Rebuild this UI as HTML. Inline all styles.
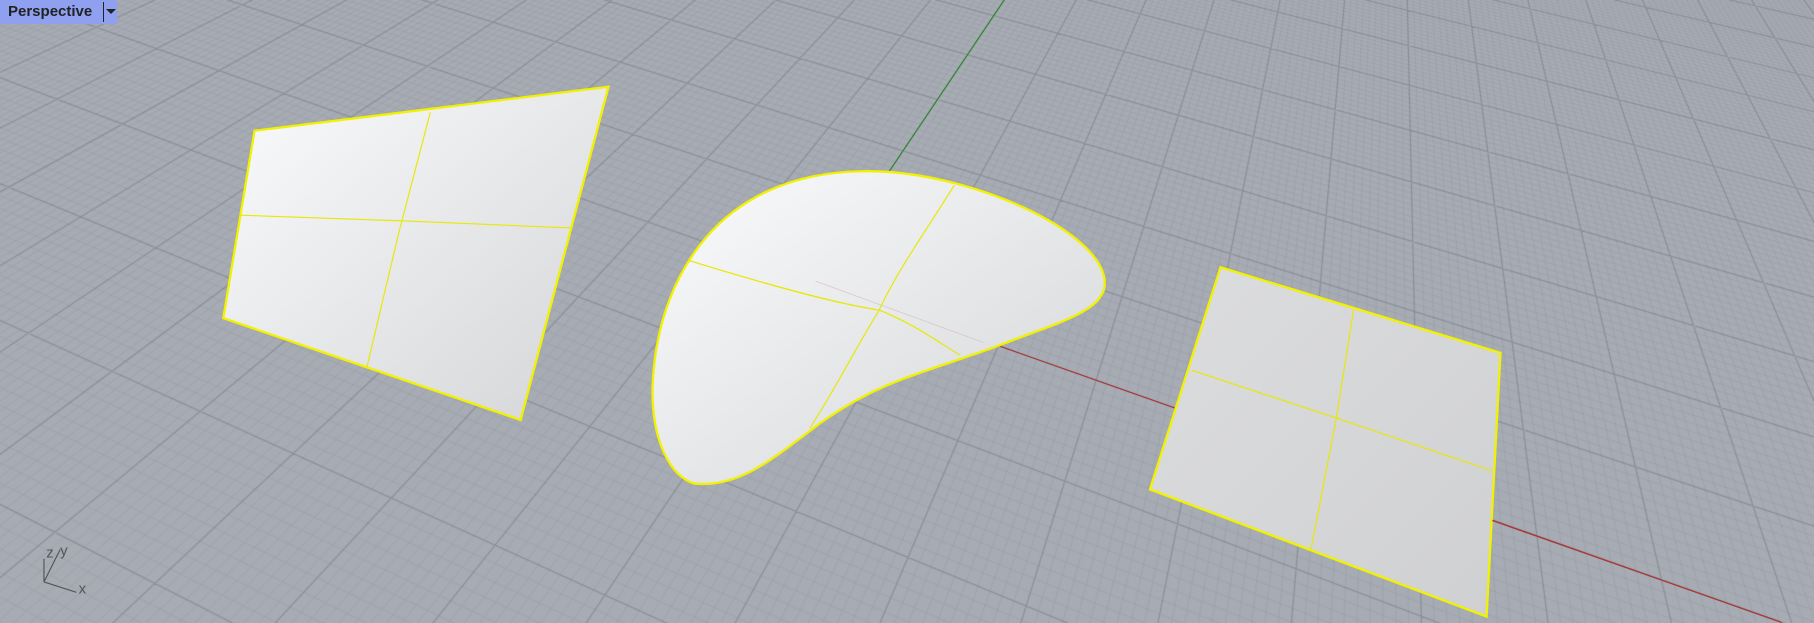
<!DOCTYPE html>
<html><head><meta charset="utf-8"><style>
html,body{margin:0;padding:0;width:1814px;height:623px;overflow:hidden;background:#a7abb3}
canvas,svg{position:absolute;left:0;top:0}
#lbl{position:absolute;left:0;top:0;width:117px;height:24px;background:#8fa0f0;font:bold 15px "Liberation Sans",sans-serif;color:#222;}
#lbl span{position:absolute;left:8px;top:3px}
#lbl i{position:absolute;left:103px;top:2px;width:1px;height:20px;background:#222}
#lbl b{position:absolute;left:106px;top:9px;border-left:5px solid transparent;border-right:5px solid transparent;border-top:5px solid #222}
</style></head><body>
<canvas id="c" width="1814" height="623"></canvas>
<svg width="1814" height="623" viewBox="0 0 1568 538.5">
<defs>
<linearGradient id="g1" x1="0" y1="0" x2="1" y2="1"><stop offset="0" stop-color="#fafbfc"/><stop offset="1" stop-color="#d4d5d7"/></linearGradient>
<linearGradient id="g2" x1="0" y1="0" x2="1" y2="1"><stop offset="0" stop-color="#dcdddf"/><stop offset="1" stop-color="#cfd0d2"/></linearGradient>
</defs>
<line x1="868" y1="0" x2="705" y2="243" stroke="#2e8a2e" stroke-width="1"/>
<line x1="705" y1="243" x2="1540" y2="538" stroke="#a83a3a" stroke-width="1"/>
<polygon points="220,113 526,75 450,363 193,275" fill="url(#g1)" stroke="#f2f200" stroke-width="2"/>
<path d="M207,186 L350,191 L493,197 M372,97 L345,200 L317,318" fill="none" stroke="#e8e800" stroke-width="1"/>
<path d="M600,418 C575,410 560,370 565,320 C572,240 620,150 745,148 C835,146 955,200 955,245 C955,270 910,280 860,300 C790,325 760,330 710,365 C670,395 640,422 600,418 Z" fill="url(#g1)" stroke="#f2f200" stroke-width="2"/>
<path d="M705,243 L850,296" stroke="#c9a0a0" stroke-width="0.6" opacity="0.5"/>
<path d="M595,225 C660,245 720,262 760,268 C790,280 810,295 830,307 M825,160 C800,200 775,235 760,268 C740,300 720,340 700,370" fill="none" stroke="#e8e800" stroke-width="1"/>
<polygon points="1055,231 1297,305 1285,533 994,423" fill="url(#g2)" stroke="#f2f200" stroke-width="2"/>
<path d="M1030,320 L1157,362 L1290,407 M1170,268 L1155,362 L1133,476" fill="none" stroke="#e8e800" stroke-width="1"/>
<line x1="1290" y1="450" x2="1540" y2="538" stroke="#a83a3a" stroke-width="1"/>
<g stroke="#555" stroke-width="1" fill="none">
<path d="M38,503 L38,483 M38,503 L52,475 M38,503 L66,512"/>
</g>
<g font-family="Liberation Sans,sans-serif" font-size="13" fill="#555">
<text x="40" y="482">z</text><text x="52" y="480">y</text><text x="68" y="513">x</text>
</g>
</svg>
<div id="lbl"><span>Perspective</span><i></i><b></b></div>
<script>
var c=document.getElementById('c'),x=c.getContext('2d');
x.scale(1814/1568,623/538.5);
var O=[705,243],Vx=[-2795,-992],Vy=[1205,-502],a=0.00216,b=0.0089;
function P(u,v){var w=1+u*a+v*b;return [(O[0]+u*a*Vx[0]+v*b*Vy[0])/w,(O[1]+u*a*Vx[1]+v*b*Vy[1])/w];}
function draw(major){
 x.strokeStyle=major?'rgba(90,94,102,0.38)':'rgba(120,124,132,0.2)';
 x.lineWidth=major?1:0.7;
 x.beginPath();
 for(var k=-460;k<=3000;k++){
  if((k%10===0)!==major)continue;
  var lo=Math.max(-3000,(0.02-1-k*a)/b),hi=4000;
  if(lo<hi){var p=P(k,lo),q=P(k,hi);x.moveTo(p[0],p[1]);x.lineTo(q[0],q[1]);}
  var lo2=Math.max(-3000,(0.02-1-k*b)/a);
  if(k>=-110){var p2=P(lo2,k),q2=P(4000,k);x.moveTo(p2[0],p2[1]);x.lineTo(q2[0],q2[1]);}
 }
 x.stroke();
}
draw(false);draw(true);
</script>
</body></html>
